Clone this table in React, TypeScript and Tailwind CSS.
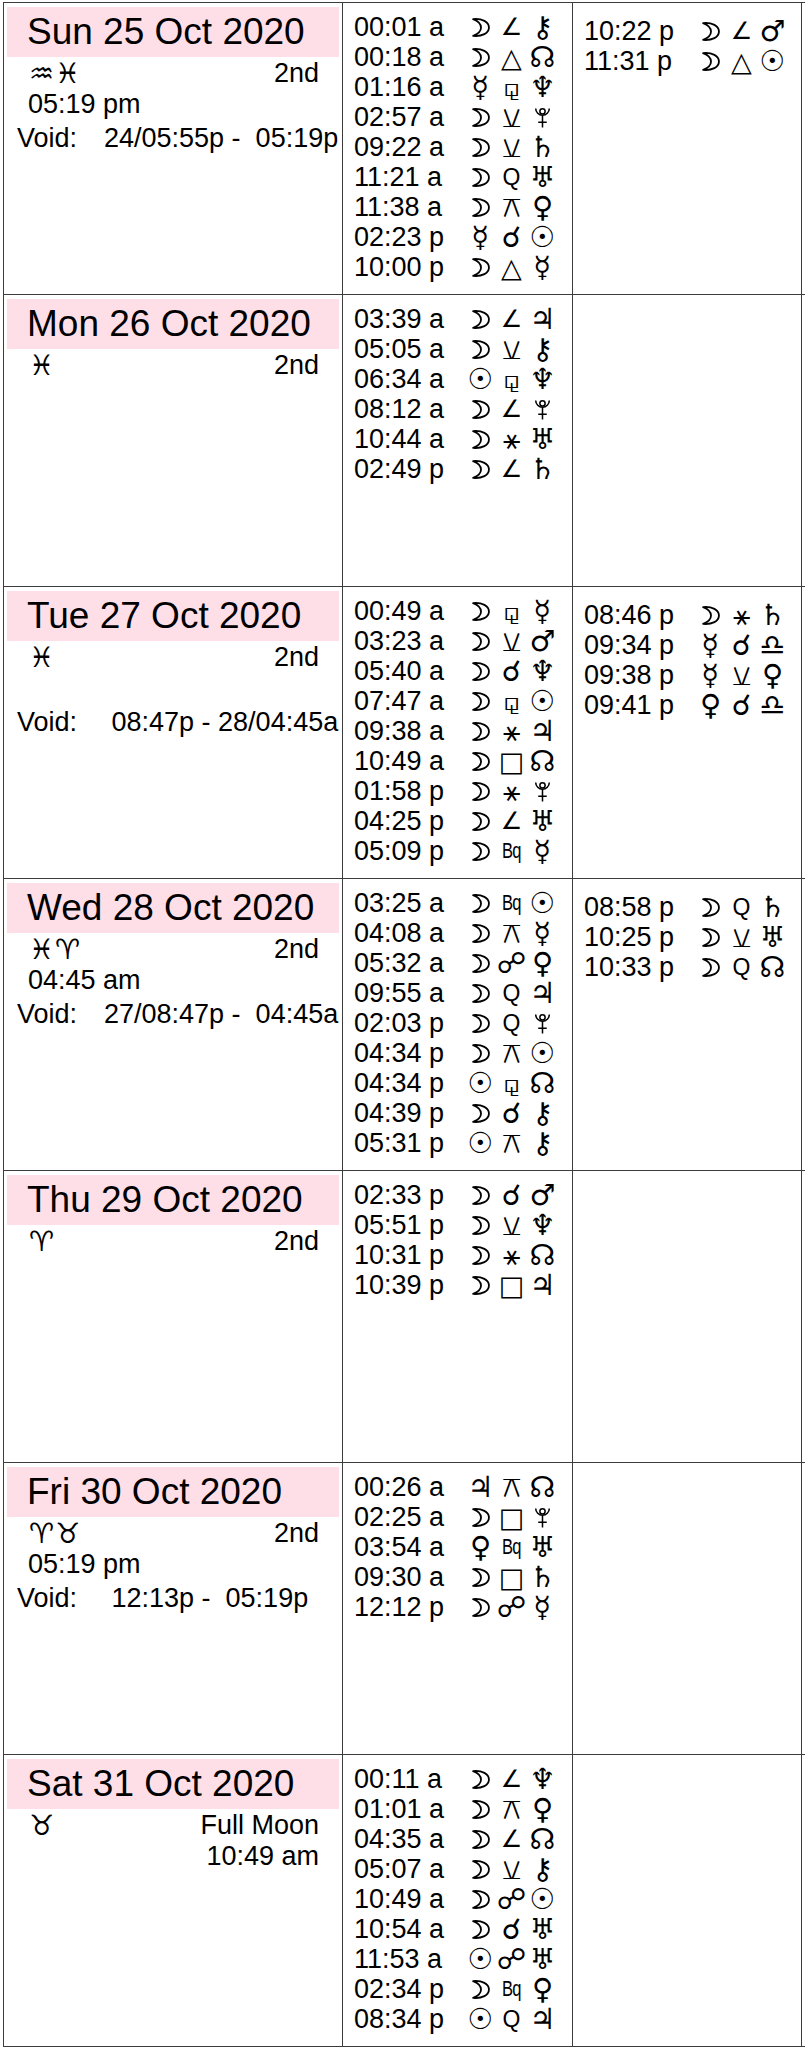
import React from "react";

type Ev = [string, string, string, string];

type Day = {
  date: string;
  signs: string;
  phase: string;
  phaseTime?: string;
  ingress?: string;
  voidText?: string;
  a: Ev[];
  b: Ev[];
};

const days: Day[] = [
  {
    date: "Sun 25 Oct 2020",
    signs: "♒♓",
    phase: "2nd",
    ingress: "05:19 pm",
    voidText: "24/05:55p -  05:19p",
    a: [
      ["00:01 a", "☽", "∠", "⚷"],
      ["00:18 a", "☽", "△", "☊"],
      ["01:16 a", "☿", "⚼", "♆"],
      ["02:57 a", "☽", "⚺", "♇"],
      ["09:22 a", "☽", "⚺", "♄"],
      ["11:21 a", "☽", "Q", "♅"],
      ["11:38 a", "☽", "⚻", "♀"],
      ["02:23 p", "☿", "☌", "☉"],
      ["10:00 p", "☽", "△", "☿"],
    ],
    b: [
      ["10:22 p", "☽", "∠", "♂"],
      ["11:31 p", "☽", "△", "☉"],
    ],
  },
  {
    date: "Mon 26 Oct 2020",
    signs: "♓",
    phase: "2nd",
    a: [
      ["03:39 a", "☽", "∠", "♃"],
      ["05:05 a", "☽", "⚺", "⚷"],
      ["06:34 a", "☉", "⚼", "♆"],
      ["08:12 a", "☽", "∠", "♇"],
      ["10:44 a", "☽", "⚹", "♅"],
      ["02:49 p", "☽", "∠", "♄"],
    ],
    b: [],
  },
  {
    date: "Tue 27 Oct 2020",
    signs: "♓",
    phase: "2nd",
    ingress: "",
    voidText: " 08:47p - 28/04:45a",
    a: [
      ["00:49 a", "☽", "⚼", "☿"],
      ["03:23 a", "☽", "⚺", "♂"],
      ["05:40 a", "☽", "☌", "♆"],
      ["07:47 a", "☽", "⚼", "☉"],
      ["09:38 a", "☽", "⚹", "♃"],
      ["10:49 a", "☽", "□", "☊"],
      ["01:58 p", "☽", "⚹", "♇"],
      ["04:25 p", "☽", "∠", "♅"],
      ["05:09 p", "☽", "Bq", "☿"],
    ],
    b: [
      ["08:46 p", "☽", "⚹", "♄"],
      ["09:34 p", "☿", "☌", "♎"],
      ["09:38 p", "☿", "⚺", "♀"],
      ["09:41 p", "♀", "☌", "♎"],
    ],
  },
  {
    date: "Wed 28 Oct 2020",
    signs: "♓♈",
    phase: "2nd",
    ingress: "04:45 am",
    voidText: "27/08:47p -  04:45a",
    a: [
      ["03:25 a", "☽", "Bq", "☉"],
      ["04:08 a", "☽", "⚻", "☿"],
      ["05:32 a", "☽", "☍", "♀"],
      ["09:55 a", "☽", "Q", "♃"],
      ["02:03 p", "☽", "Q", "♇"],
      ["04:34 p", "☽", "⚻", "☉"],
      ["04:34 p", "☉", "⚼", "☊"],
      ["04:39 p", "☽", "☌", "⚷"],
      ["05:31 p", "☉", "⚻", "⚷"],
    ],
    b: [
      ["08:58 p", "☽", "Q", "♄"],
      ["10:25 p", "☽", "⚺", "♅"],
      ["10:33 p", "☽", "Q", "☊"],
    ],
  },
  {
    date: "Thu 29 Oct 2020",
    signs: "♈",
    phase: "2nd",
    a: [
      ["02:33 p", "☽", "☌", "♂"],
      ["05:51 p", "☽", "⚺", "♆"],
      ["10:31 p", "☽", "⚹", "☊"],
      ["10:39 p", "☽", "□", "♃"],
    ],
    b: [],
  },
  {
    date: "Fri 30 Oct 2020",
    signs: "♈♉",
    phase: "2nd",
    ingress: "05:19 pm",
    voidText: " 12:13p -  05:19p",
    a: [
      ["00:26 a", "♃", "⚻", "☊"],
      ["02:25 a", "☽", "□", "♇"],
      ["03:54 a", "♀", "Bq", "♅"],
      ["09:30 a", "☽", "□", "♄"],
      ["12:12 p", "☽", "☍", "☿"],
    ],
    b: [],
  },
  {
    date: "Sat 31 Oct 2020",
    signs: "♉",
    phase: "Full Moon",
    phaseTime: "10:49 am",
    a: [
      ["00:11 a", "☽", "∠", "♆"],
      ["01:01 a", "☽", "⚻", "♀"],
      ["04:35 a", "☽", "∠", "☊"],
      ["05:07 a", "☽", "⚺", "⚷"],
      ["10:49 a", "☽", "☍", "☉"],
      ["10:54 a", "☽", "☌", "♅"],
      ["11:53 a", "☉", "☍", "♅"],
      ["02:34 p", "☽", "Bq", "♀"],
      ["08:34 p", "☉", "Q", "♃"],
    ],
    b: [],
  },
];

// text presentation, so the zodiac signs never turn into emoji
const txt = (s: string) =>
  Array.from(s)
    .map((c) => c + "\uFE0E")
    .join("");

// DejaVu's moon is a thin sliver, the chart uses a fat outlined one
const Moon = () => (
  <svg viewBox="0 0 18 18" className="h-[19px] w-[19px]" fill="none" stroke="black" strokeWidth="1.7" strokeLinejoin="round">
    <title>☽</title>
    <path d="M2 1 C10.5 0.3 17 3.6 17 9 C17 14.4 10.5 17.7 2 17 C7 15 9.5 12.3 9.5 9 C9.5 5.7 7 3 2 1 Z" />
  </svg>
);

// orb-and-crescent pluto, DejaVu only has the PL monogram
const Pluto = () => (
  <svg viewBox="0 0 18 22" className="h-[21px] w-[17px]" fill="none" stroke="black" strokeWidth="1.6">
    <title>♇</title>
    <circle cx="9" cy="4.5" r="2.8" />
    <path d="M1.8 1.5 A7.2 7.2 0 0 0 16.2 1.5" />
    <path d="M9 8.7 V21.5 M4.5 16 H13.5" />
  </svg>
);

// per-glyph size, DejaVu draws some of them small or heavy
const size: Record<string, string> = {
  "∠": "text-[24px]",
  "⚼": "text-[25px]",
  "△": "text-[27px]",
  "□": "text-[27px]",
};

const Glyph = ({ g }: { g: string }) => {
  const box = "flex h-[30px] w-[31px] items-center justify-center leading-none";
  if (g === "☽") {
    return (
      <span className={box}>
        <Moon />
      </span>
    );
  }
  if (g === "♇") {
    return (
      <span className={box}>
        <Pluto />
      </span>
    );
  }
  if (g === "Q") {
    return <span className={box + " text-[23px]"}>Q</span>;
  }
  if (g === "Bq") {
    return (
      <span className={box}>
        <span className="inline-block scale-x-75 text-[22px] tracking-[-1px]">Bq</span>
      </span>
    );
  }
  return (
    <span className={box + " font-['DejaVu_Sans',sans-serif] " + (size[g] ?? "text-[29px]")}>{txt(g)}</span>
  );
};

const Events = ({ list, top }: { list: Ev[]; top: string }) => (
  <div className={top}>
    {list.map((e, i) => (
      <div key={i} className="flex h-[30px] items-center">
        <span className="w-[111px] whitespace-pre leading-[30px]">{e[0]}</span>
        <Glyph g={e[1]} />
        <Glyph g={e[2]} />
        <Glyph g={e[3]} />
      </div>
    ))}
  </div>
);

const DayRow = ({ day }: { day: Day }) => (
  <div className="flex h-[292px] border-b border-[#3c3c3c]">
    {/* date column */}
    <div className="w-[339px] shrink-0 border-r border-[#3c3c3c] px-[3px] pt-[4px]">
      <div className="h-[50px] bg-[#ffdfe7] pl-[20px] text-[37px] leading-[50px]">{day.date}</div>
      <div className="mt-[1px] text-[27px] leading-[31px]">
        <div className="flex h-[31px] items-center justify-between pl-[22px] pr-[20px]">
          <span className="font-['DejaVu_Sans',sans-serif] text-[28px] leading-none tracking-[1px]">{txt(day.signs)}</span>
          <span>{day.phase}</span>
        </div>
        {(day.ingress !== undefined || day.phaseTime) && (
          <div className="flex h-[31px] justify-between pl-[21px] pr-[20px]">
            <span>{day.ingress}</span>
            <span>{day.phaseTime}</span>
          </div>
        )}
        {day.voidText && (
          <div className="mt-[3px] flex pl-[10px]">
            <span className="w-[87px]">Void:</span>
            <span className="whitespace-pre">{day.voidText}</span>
          </div>
        )}
      </div>
    </div>

    {/* aspects */}
    <div className="w-[230px] shrink-0 border-r border-[#3c3c3c] pl-[11px] text-[27px]">
      <Events list={day.a} top="pt-[9px]" />
    </div>
    <div className="w-[229px] shrink-0 border-r border-[#3c3c3c] pl-[11px] text-[27px]">
      <Events list={day.b} top="pt-[13px]" />
    </div>
    <div className="flex-1" />
  </div>
);

export default function App() {
  return (
    <div className="h-[2048px] w-[805px] overflow-hidden bg-white pl-[3px] pt-[2px] font-['Liberation_Sans',Arial,sans-serif] text-black">
      <div className="w-[1000px] border-l border-t border-[#3c3c3c]">
        {days.map((d) => (
          <DayRow key={d.date} day={d} />
        ))}
      </div>
    </div>
  );
}
